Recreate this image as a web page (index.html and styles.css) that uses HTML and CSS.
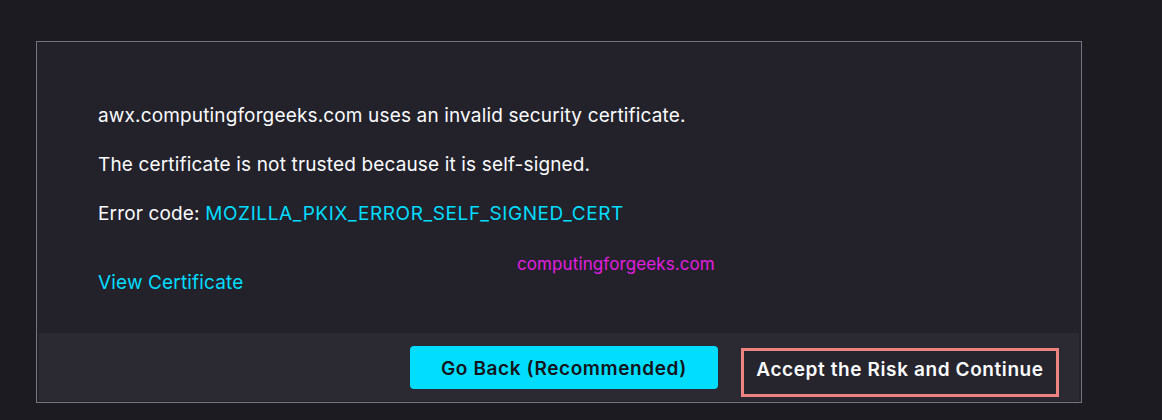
FILE: index.html
```html
<!DOCTYPE html>
<html>
<head>
<meta charset="utf-8">
<link rel="stylesheet" href="styles.css">
</head>
<body>
<div class="panel">
  <div class="content">
    <p class="line">awx.computingforgeeks.com uses an invalid security certificate.</p>
    <p class="line">The certificate is not trusted because it is self-signed.</p>
    <p class="line">Error code: <span class="link code">MOZILLA_PKIX_ERROR_SELF_SIGNED_CERT</span></p>
    <p class="line view"><span class="link">View Certificate</span></p>
    <div class="watermark">computingforgeeks.com</div>
  </div>
  <div class="footer">
    <button class="btn primary">Go Back (Recommended)</button>
    <button class="btn accept">Accept the Risk and Continue</button>
  </div>
</div>
</body>
</html>
```
FILE: styles.css
```css
html, body {
  margin: 0;
  padding: 0;
  background: #1c1b22;
  height: 100%;
}
body {
  font-family: Inter, "Liberation Sans", Arial, sans-serif;
  color: #fbfbfe;
  padding-top: 41px;
  padding-left: 36px;
  box-sizing: border-box;
}
.panel {
  width: 1046px;
  box-sizing: border-box;
  border: 1px solid #76757d;
  background: #23222b;
  display: flex;
  flex-direction: column;
}
.content {
  position: relative;
  padding: 62px 61px 38px 61px;
}
.line {
  margin: 0 0 25px 0;
  font-size: 19px;
  line-height: 24px;
  letter-spacing: 0.15px;
}
.line.view {
  margin: 45px 0 0 0;
}
.link {
  color: #00ddff;
}
.code {
  letter-spacing: 0.6px;
}
.watermark {
  position: absolute;
  left: 480px;
  top: 212px;
  font-size: 17px;
  line-height: 20px;
  letter-spacing: 0.1px;
  color: #e21de0;
}
.footer {
  background: #2b2a33;
  margin: 0 2px 1px 2px;
  height: 68px;
  display: flex;
  justify-content: flex-end;
  align-items: flex-start;
  padding: 13px 20px 0 0;
  box-sizing: border-box;
  gap: 23px;
}
.btn {
  font-family: Inter, "Liberation Sans", Arial, sans-serif;
  font-weight: 600;
  font-size: 19px;
  line-height: 24px;
  letter-spacing: 0.6px;
  border: none;
  cursor: pointer;
  box-sizing: border-box;
}
.primary {
  width: 308px;
  height: 43px;
  padding: 3px 0 0 0;
  border-radius: 4px;
  background: #00ddff;
  color: #15141a;
}
.accept {
  width: 318px;
  height: 49px;
  margin-top: 2px;
  border: 3px solid #ee8481;
  background: #26252e;
  color: #fbfbfe;
  display: flex;
  justify-content: center;
  align-items: flex-start;
  padding-top: 7px;
}
```
